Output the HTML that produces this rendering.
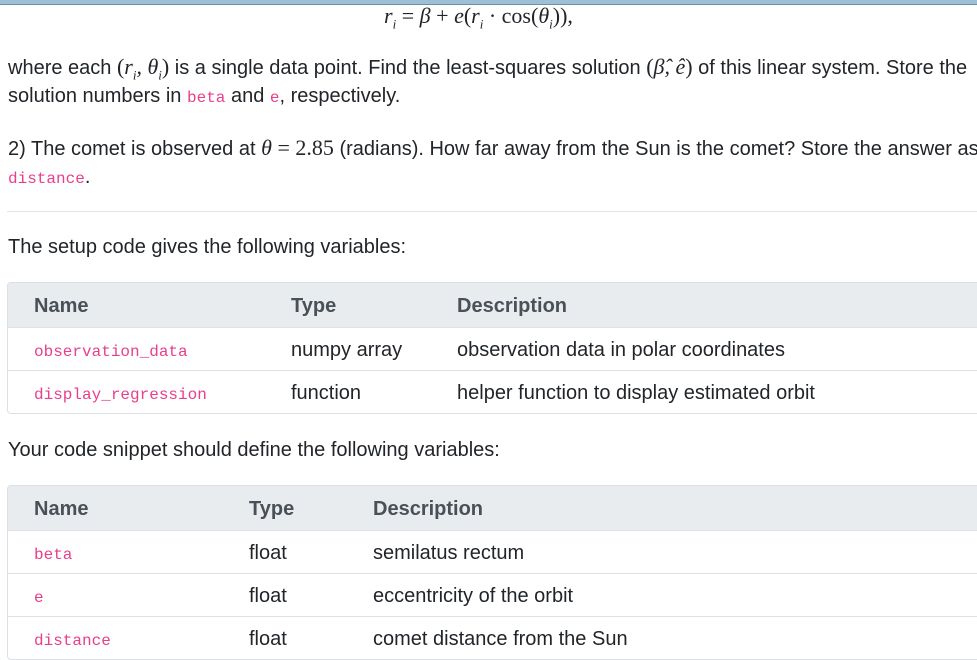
<!DOCTYPE html>
<html><head><meta charset="utf-8"><style>
body{margin:0;width:977px;height:648px;overflow:hidden;background:#fff;font-family:"Liberation Sans",sans-serif;font-size:20px;color:#212529;position:relative}
.top{position:absolute;left:0;top:0;width:977px;height:4px;background:#9dc0d6;border-bottom:1px solid #6f8fa6}
.a{position:absolute;white-space:nowrap}
.m{font-family:"Liberation Serif",serif;font-style:italic;font-size:22px}
.n{font-family:"Liberation Serif",serif;font-size:22px}
code{font-family:"Liberation Mono",monospace;color:#e83e8c;font-size:16px}
hr{position:absolute;left:7px;top:211px;width:970px;margin:0;border:0;border-top:1px solid #e3e3e3}
.tbl{position:absolute;left:7px;width:985px;border:1px solid #dcdfe3;border-radius:4px;overflow:hidden}
.row{position:relative;height:42px;border-top:1px solid #dee2e6}
.row:first-child{border-top:0;height:44px;background:#e9ecef;font-weight:bold;color:#495057}
.row span{position:absolute;top:11px}
.row:first-child span{top:12px}
</style></head><body>
<div class="top"></div>
<div class="a" style="left:384px;top:3px"><span class="m">r<sub style="font-size:13px">i</sub></span> <span class="n">= </span><span class="m">β</span><span class="n"> + </span><span class="m">e</span><span class="n">(</span><span class="m">r<sub style="font-size:13px">i</sub></span><span class="n"> · cos(</span><span class="m">θ<sub style="font-size:13px">i</sub></span><span class="n">)),</span></div>
<div class="a" style="left:8px;top:54px">where each <span class="n">(</span><span class="m">r<sub style="font-size:13px">i</sub>, θ<sub style="font-size:13px">i</sub></span><span class="n">)</span> is a single data point. Find the least-squares solution <span class="n">(</span><span class="m">β̂, ê</span><span class="n">)</span> of this linear system. Store the</div>
<div class="a" style="left:8px;top:85px">solution numbers in <code>beta</code> and <code>e</code>, respectively.</div>
<div class="a" style="left:8px;top:135px">2) The comet is observed at <span class="m">θ</span> <span class="n">= 2.85</span> (radians). How far away from the Sun is the comet? Store the answer as</div>
<div class="a" style="left:8px;top:166px"><code>distance</code>.</div>
<hr>
<div class="a" style="left:8px;top:236px">The setup code gives the following variables:</div>
<div class="tbl" style="top:282px">
<div class="row"><span style="left:26px">Name</span><span style="left:283px">Type</span><span style="left:449px">Description</span></div>
<div class="row"><span style="left:26px"><code>observation_data</code></span><span style="left:283px">numpy array</span><span style="left:449px">observation data in polar coordinates</span></div>
<div class="row"><span style="left:26px"><code>display_regression</code></span><span style="left:283px">function</span><span style="left:449px">helper function to display estimated orbit</span></div>
</div>
<div class="a" style="left:8px;top:439px">Your code snippet should define the following variables:</div>
<div class="tbl" style="top:485px">
<div class="row"><span style="left:26px">Name</span><span style="left:241px">Type</span><span style="left:365px">Description</span></div>
<div class="row"><span style="left:26px"><code>beta</code></span><span style="left:241px">float</span><span style="left:365px">semilatus rectum</span></div>
<div class="row"><span style="left:26px"><code>e</code></span><span style="left:241px">float</span><span style="left:365px">eccentricity of the orbit</span></div>
<div class="row"><span style="left:26px"><code>distance</code></span><span style="left:241px">float</span><span style="left:365px">comet distance from the Sun</span></div>
</div>
</body></html>
